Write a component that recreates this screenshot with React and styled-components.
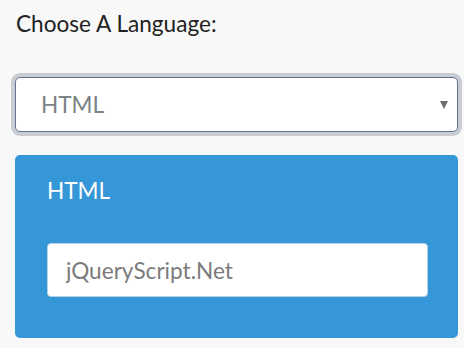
import React from "react";
import styled, { createGlobalStyle } from "styled-components";

const Global = createGlobalStyle`
  html, body { margin: 0; padding: 0; background: #ffffff; }
  body { font-family: Lato, "Open Sans", "Liberation Sans", sans-serif; }
  * { box-sizing: border-box; }
`;

const Page = styled.div`
  width: 464px;
  height: 348px;
  background: #f8f8f8;
  padding: 11px 0 0 15px;
`;

const Label = styled.label`
  display: block;
  font-size: 22.6px;
  line-height: 26px;
  color: #222222;
  padding-left: 1px;
`;

const SelectWrap = styled.div`
  position: relative;
  width: 443px;
  margin-top: 40px;
`;

const Select = styled.select`
  appearance: none;
  -webkit-appearance: none;
  display: block;
  width: 100%;
  height: 55px;
  padding: 0 40px 0 25px;
  font-family: inherit;
  font-size: 22.6px;
  line-height: 26px;
  color: #7d8385;
  background: #ffffff;
  border: 1.5px solid #61748f;
  border-radius: 5px;
  box-shadow: 0 0 0 4px #c8cdd2;
  outline: none;
`;

const Arrow = styled.span`
  position: absolute;
  right: 10px;
  top: 24px;
  width: 0;
  height: 0;
  border-left: 4px solid transparent;
  border-right: 4px solid transparent;
  border-top: 8px solid #6a6f70;
  pointer-events: none;
`;

const Panel = styled.section`
  width: 443px;
  margin-top: 23px;
  background: #3596d8;
  border-radius: 5px;
  padding: 22.5px 30px 41px 32px;
`;

const PanelTitle = styled.h2`
  margin: 0;
  font-size: 22.6px;
  line-height: 26px;
  font-weight: 400;
  color: #ffffff;
`;

const Field = styled.input`
  display: block;
  width: 381px;
  height: 54px;
  margin-top: 39.5px;
  padding: 0 18px;
  font-family: inherit;
  font-size: 22.6px;
  line-height: 26px;
  color: #7b7b7b;
  background: #ffffff;
  border: 1px solid #b7d3ea;
  border-radius: 4px;
  outline: none;
`;

export default function App() {
  return (
    <>
      <Global />
      <Page>
        <Label htmlFor="lang">Choose A Language:</Label>
        <SelectWrap>
          <Select id="lang" defaultValue="html">
            <option value="html">HTML</option>
            <option value="css">CSS</option>
            <option value="js">JavaScript</option>
          </Select>
          <Arrow />
        </SelectWrap>
        <Panel>
          <PanelTitle>HTML</PanelTitle>
          <Field defaultValue="jQueryScript.Net" />
        </Panel>
      </Page>
    </>
  );
}
